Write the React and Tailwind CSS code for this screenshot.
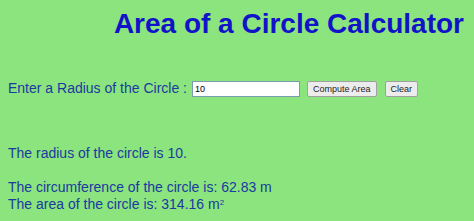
import React, { useState } from "react";

const App = () => {
  const [radius, setRadius] = useState("10");

  return (
    <div className="w-[474px] h-[221px] bg-[#8be47d] overflow-hidden font-['Liberation_Sans',Arial,sans-serif]">
      <h1 className="pt-[7px] pr-[10px] text-right text-[28px] leading-[34px] font-bold text-[#1212c8]">
        Area of a Circle Calculator
      </h1>

      <div className="flex items-center mt-[37px] pl-[8px] text-[14px] text-[#1a3aa0]">
        <span>Enter a Radius of the Circle :</span>
        <input
          type="text"
          value={radius}
          onChange={(e) => setRadius(e.target.value)}
          className="ml-[5px] w-[108px] h-[16px] px-[2px] text-[9px] text-black bg-white border border-[#7a9ab0] outline-none"
        />
        <button className="ml-[7px] h-[16px] px-[5px] text-[9px] leading-[14px] text-[#222] bg-[#ececec] border border-[#a0a0a0] rounded-[2px]">
          Compute Area
        </button>
        <button className="ml-[8px] h-[16px] px-[5px] text-[9px] leading-[14px] text-[#222] bg-[#ececec] border border-[#a0a0a0] rounded-[2px]">
          Clear
        </button>
      </div>

      <div className="mt-[46px] pl-[8px] text-[14px] leading-[17px] text-[#1a3aa0]">
        <p>The radius of the circle is 10.</p>
        <p className="mt-[17px]">The circumference of the circle is: 62.83 m</p>
        <p>
          The area of the circle is: 314.16 m<sup className="text-[8px]">2</sup>
        </p>
      </div>
    </div>
  );
};

export default App;
